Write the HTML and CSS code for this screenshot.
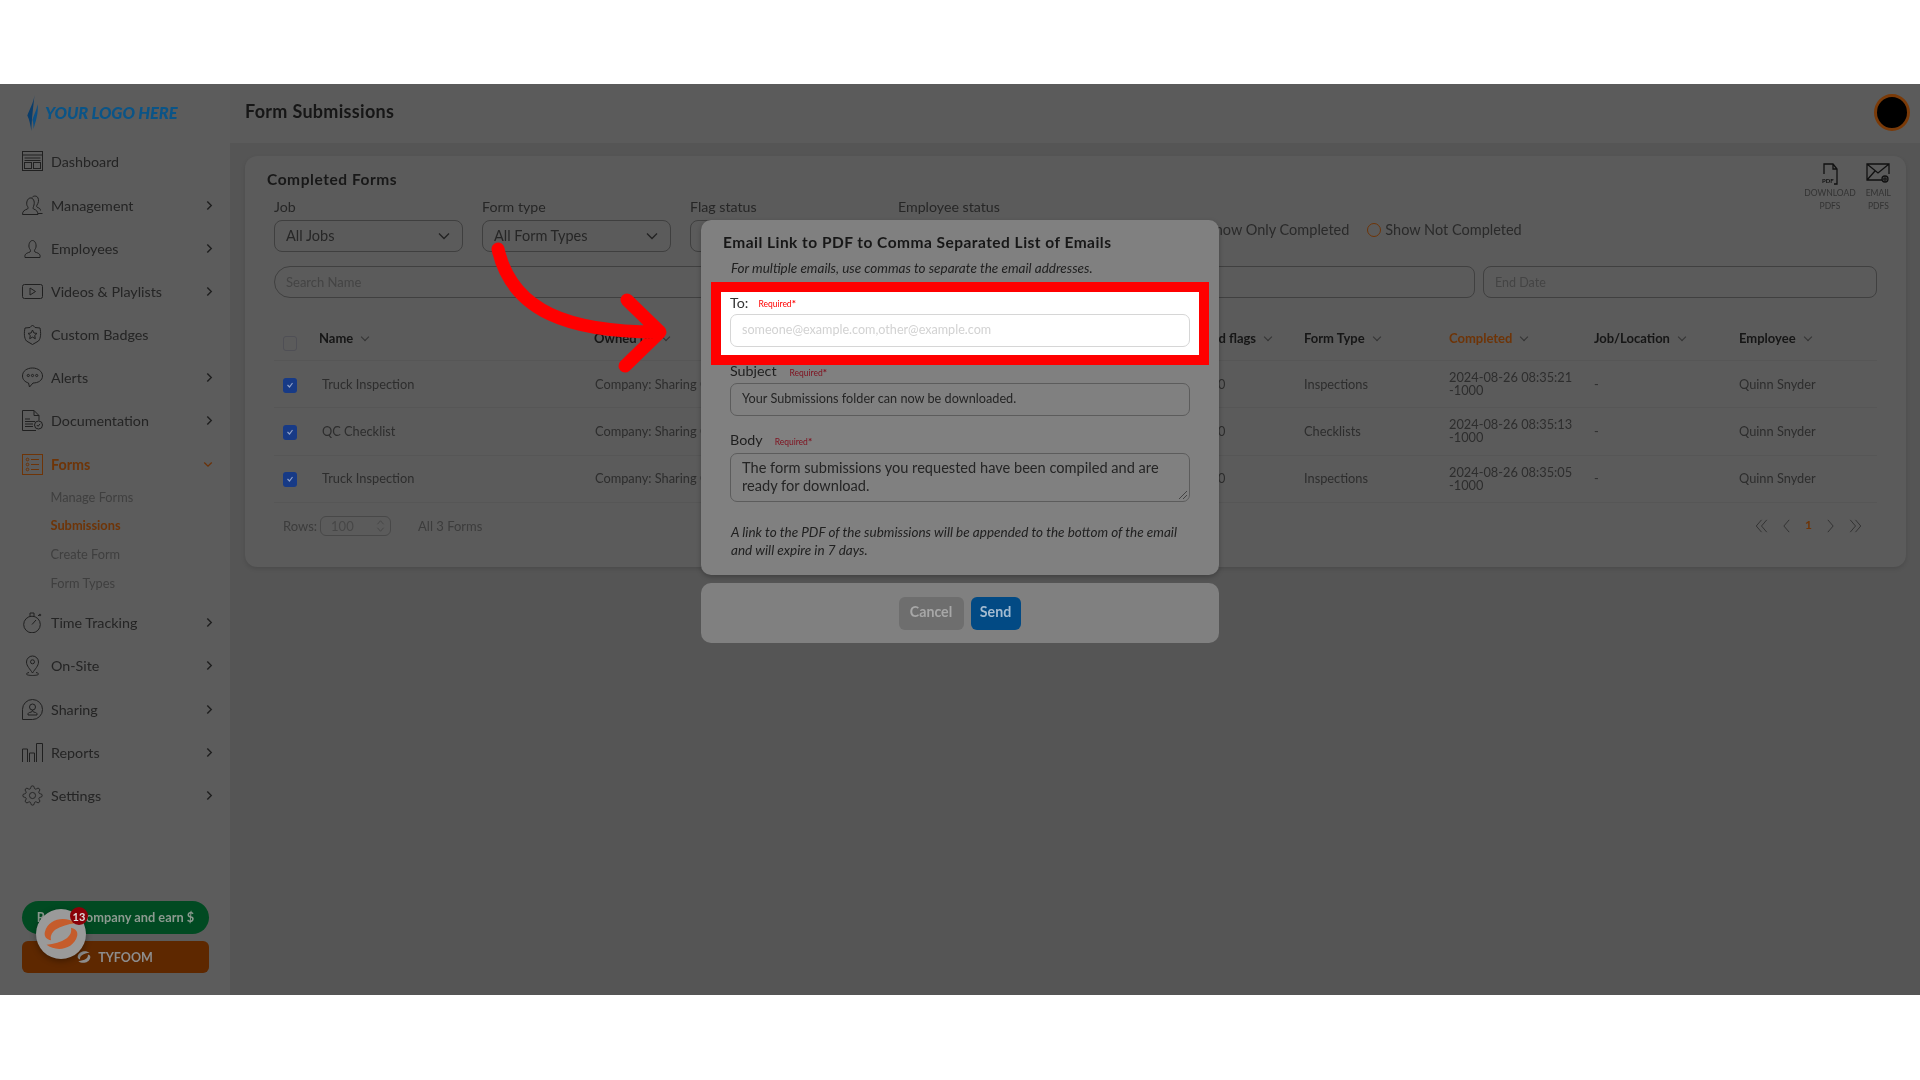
FILE: index.html
```html
<!DOCTYPE html>
<html lang="en">
<head>
<meta charset="utf-8">
<title>Form Submissions</title>
<link rel="stylesheet" href="styles.css">
</head>
<body>
<div class="app">
  <aside class="sidebar">
    <div class="logo">
      <svg class="logo-mark" viewBox="0 0 12 35"><path d="M7 0 C6 8 2 14 0 20 C2 24 3 29 4 35 C4 27 5 18 7 0Z" fill="#0a3d6b"/><path d="M10 9 C9 15 6 20 5 24 C6 27 6 30 6 33 C8 26 11 18 10 9Z" fill="#0a4f85"/></svg>
      <span class="logo-text">YOUR LOGO HERE</span>
    </div>
    <nav class="nav">
      <a class="nav-item"><svg class="ico" viewBox="0 0 21 21"><rect x=".5" y=".5" width="20" height="19"/><path d="M.5 4h20M2.5 7h16M2.5 9.500h16"/><rect x="2.500" y="11.500" width="7" height="6"/><rect x="11.500" y="11.500" width="7" height="6"/></svg><span>Dashboard</span></a>
      <a class="nav-item"><svg class="ico" viewBox="0 0 21 21"><path d="M.5 19.500c0-3.500 2-4.500 5-5.500 1-1 .5-2-.5-3.500-1-3 .5-7 3-7.500 3-.5 5 3 4 7-.5 2-1.500 3-.5 4 3 1 4 2 4.500 5.500z"/><path d="M10 2.500c1.500-2 5-2 6 .5 1 2 .5 5-1 7-.5 1-.5 2 .5 2.500 2 .5 3 1.500 3 3"/><path d="M16 18.500h4.500"/></svg><span>Management</span><svg class="chev" viewBox="0 0 8 12"><path d="M1.500 1.500 6 6l-4.500 4.500"/></svg></a>
      <a class="nav-item"><svg class="ico" viewBox="0 0 21 21"><path d="M3 19.500c-.5-3 .5-4 5-5.500 1-1 .5-2-.5-3.500-1.500-3 0-8 3-8s4.500 5 3 8c-1 1.500-1.500 2.500-.5 3.500 4.500 1.500 5.500 2.500 5 5.500z"/></svg><span>Employees</span><svg class="chev" viewBox="0 0 8 12"><path d="M1.500 1.500 6 6l-4.500 4.500"/></svg></a>
      <a class="nav-item"><svg class="ico" viewBox="0 0 21 21"><rect x=".5" y="3.500" width="20" height="14" rx="2"/><path d="m8 7 5.500 3.500L8 14z"/></svg><span>Videos &amp; Playlists</span><svg class="chev" viewBox="0 0 8 12"><path d="M1.500 1.500 6 6l-4.500 4.500"/></svg></a>
      <a class="nav-item"><svg class="ico" viewBox="0 0 21 21"><path d="M10.500 1 13 3.500l5 .5c1 5 1 10-1.500 13l-6 3.500-6-3.500C2 14 2 9 3 4l5-.5z"/><path d="m10.500 6 1.400 3 3.100.4-2.300 2.100.6 3.200-2.800-1.600-2.800 1.600.6-3.200L6 9.400 9.100 9z"/></svg><span>Custom Badges</span></a>
      <a class="nav-item"><svg class="ico" viewBox="0 0 21 21"><path d="M10.500 1C5 1 .5 4 .5 9c0 3.500 2.500 6 6 7l1 4 3.500-4c5 0 9.500-2.500 9.500-7s-4.500-8-10-8z"/><circle cx="6.300" cy="8.500" r="1.100"/><circle cx="10.500" cy="8.500" r="1.100"/><circle cx="14.700" cy="8.500" r="1.100"/></svg><span>Alerts</span><svg class="chev" viewBox="0 0 8 12"><path d="M1.500 1.500 6 6l-4.500 4.500"/></svg></a>
      <a class="nav-item"><svg class="ico" viewBox="0 0 21 21"><path d="M14 20.500H.5V.5H12l5 5v5"/><path d="M12 .5v5h5M3 9h5M3 11.500h10M3 14h8M3 16.500h8"/><circle cx="16.500" cy="15" r="4"/><path d="m14.800 15 1.300 1.300 2-2.500"/></svg><span>Documentation</span><svg class="chev" viewBox="0 0 8 12"><path d="M1.500 1.500 6 6l-4.500 4.500"/></svg></a>
      <a class="nav-item active"><svg class="ico" viewBox="0 0 21 21"><rect x=".5" y=".5" width="20" height="20"/><circle cx="5.500" cy="5.500" r="1.300"/><circle cx="5.500" cy="10.500" r="1.300"/><circle cx="5.500" cy="15.500" r="1.300"/><path d="M9 5.500h8M9 10.500h8M9 15.500h8"/></svg><span>Forms</span><svg class="chev-down" viewBox="0 0 12 8"><path d="M1.500 1.500 6 6l4.500-4.500"/></svg></a>
      <div class="subnav">
        <a class="sub-item">Manage Forms</a>
        <a class="sub-item current">Submissions</a>
        <a class="sub-item">Create Form</a>
        <a class="sub-item">Form Types</a>
      </div>
      <a class="nav-item"><svg class="ico" viewBox="0 0 21 21"><circle cx="10" cy="12.500" r="8.300"/><path d="M8 4V1h4v3M10 12.500l4-4.500M16 4l1.500-1.500"/><circle cx="18" cy="3" r=".8"/></svg><span>Time Tracking</span><svg class="chev" viewBox="0 0 8 12"><path d="M1.500 1.500 6 6l-4.500 4.500"/></svg></a>
      <a class="nav-item"><svg class="ico" viewBox="0 0 21 21"><path d="M10.500 18C8 14 4.500 11 4.500 7a6 6 0 0 1 12 0c0 4-3.500 7-6 11z"/><circle cx="10.500" cy="6.800" r="2"/><path d="M7 17.500c-2 .5-2.500 1-2.500 1.500 0 1 3 1.500 6 1.500s6-.5 6-1.500c0-.5-.5-1-2.500-1.500"/></svg><span>On-Site</span><svg class="chev" viewBox="0 0 8 12"><path d="M1.500 1.500 6 6l-4.500 4.500"/></svg></a>
      <a class="nav-item"><svg class="ico" viewBox="0 0 21 21"><path d="M.5 20.500V10.500a10 10 0 1 1 10 10z"/><circle cx="10.500" cy="8" r="3"/><path d="M10.500 11c0 1.500-.5 2-3 2.500-1.500.5-1.500 1-1.500 2.500h9c0-1.500 0-2-1.500-2.500-2.500-.5-3-1-3-2.500"/></svg><span>Sharing</span><svg class="chev" viewBox="0 0 8 12"><path d="M1.500 1.500 6 6l-4.500 4.500"/></svg></a>
      <a class="nav-item"><svg class="ico" viewBox="0 0 21 21"><path d="M.5 20V7h5v13M7.500 20v-9h5v9M14.500 20V1.500h6V20"/></svg><span>Reports</span><svg class="chev" viewBox="0 0 8 12"><path d="M1.500 1.500 6 6l-4.500 4.500"/></svg></a>
      <a class="nav-item"><svg class="ico" viewBox="0 0 24 24"><circle cx="12" cy="12" r="3.500"/><path d="M19.400 15a1.650 1.650 0 0 0 .33 1.820l.06.06a2 2 0 0 1 0 2.830 2 2 0 0 1-2.830 0l-.06-.06a1.650 1.650 0 0 0-1.820-.33 1.650 1.650 0 0 0-1 1.510V21a2 2 0 0 1-2 2 2 2 0 0 1-2-2v-.09A1.650 1.650 0 0 0 9 19.400a1.650 1.650 0 0 0-1.820.33l-.06.06a2 2 0 0 1-2.830 0 2 2 0 0 1 0-2.830l.06-.06a1.650 1.650 0 0 0 .33-1.820 1.650 1.650 0 0 0-1.510-1H3a2 2 0 0 1-2-2 2 2 0 0 1 2-2h.09A1.650 1.650 0 0 0 4.600 9a1.650 1.650 0 0 0-.33-1.820l-.06-.06a2 2 0 0 1 0-2.830 2 2 0 0 1 2.830 0l.06.06a1.650 1.650 0 0 0 1.820.33H9a1.650 1.650 0 0 0 1-1.510V3a2 2 0 0 1 2-2 2 2 0 0 1 2 2v.09a1.650 1.650 0 0 0 1 1.510 1.650 1.650 0 0 0 1.820-.33l.06-.06a2 2 0 0 1 2.830 0 2 2 0 0 1 0 2.830l-.06.06a1.650 1.650 0 0 0-.33 1.820V9a1.650 1.650 0 0 0 1.510 1H21a2 2 0 0 1 2 2 2 2 0 0 1-2 2h-.09a1.650 1.650 0 0 0-1.510 1z"/></svg><span>Settings</span><svg class="chev" viewBox="0 0 8 12"><path d="M1.500 1.500 6 6l-4.500 4.500"/></svg></a>
    </nav>
    <div class="side-actions">
      <a class="promo">Refer a company and earn $</a>
      <a class="brand-btn"><svg class="swirl-small" viewBox="0 0 40 40"><path d="M36 8C26 0 6 2 2 18c-1 5 2 8 7 9-1-4 0-8 5-12 6-4 14-6 22-7Z"/><path d="M4 32c10 8 30 6 34-10 1-5-2-8-7-9 1 4 0 8-5 12-6 4-14 6-22 7Z"/></svg>TYFOOM</a>
    </div>
  </aside>
  <main class="main">
    <header class="topbar">
      <h1 class="page-title">Form Submissions</h1>
      <div class="avatar"></div>
    </header>
    <div class="content">
      <section class="card">
        <div class="card-head">
          <h2 class="card-title">Completed Forms</h2>
          <div class="exports">
            <a class="export export-pdf"><svg class="export-ico" viewBox="0 0 24 22"><path d="M6 11V1h9l4 5v15h-3M15 1v5h4"/><text x="4" y="20" class="pdf-word">PDF</text></svg><span>DOWNLOAD<br>PDFS</span></a>
            <a class="export"><svg class="export-ico" viewBox="0 0 24 22"><path d="M16 17H1V1h22v10M1 1l11 9L23 1M1 17l8-9"/><circle cx="19" cy="16" r="3"/><circle cx="19" cy="16" r="1.200"/></svg><span>EMAIL<br>PDFS</span></a>
          </div>
        </div>
        <div class="filters">
          <div class="filter"><label class="filter-label">Job</label><div class="select">All Jobs<svg class="sel-chev" viewBox="0 0 12 8"><path d="M1 1.500 6 6.500l5-5"/></svg></div></div>
          <div class="filter"><label class="filter-label">Form type</label><div class="select">All Form Types<svg class="sel-chev" viewBox="0 0 12 8"><path d="M1 1.500 6 6.500l5-5"/></svg></div></div>
          <div class="filter"><label class="filter-label">Flag status</label><div class="select"></div></div>
          <div class="filter"><label class="filter-label">Employee status</label><div class="select"></div></div>
          <div class="radios">
            <span class="radio"></span><span class="radio-text">Show Only Completed</span>
            <span class="radio"></span><span class="radio-text">Show Not Completed</span>
          </div>
        </div>
        <div class="searches">
          <div class="search-box pill">Search Name</div>
          <div class="search-box"></div>
          <div class="search-box end">End Date</div>
        </div>
        <div class="table">
          <div class="row head">
            <span class="cb empty"></span>
            <span class="th">Name<i class="sort"></i></span>
            <span class="th">Owned by<i class="sort"></i></span>
            <span class="th">Unresolved flags<i class="sort"></i></span>
            <span class="th">Form Type<i class="sort"></i></span>
            <span class="th sorted">Completed<i class="sort"></i></span>
            <span class="th">Job/Location<i class="sort"></i></span>
            <span class="th">Employee<i class="sort"></i></span>
          </div>
          <div class="row">
            <span class="cb"><svg viewBox="0 0 14 14"><path d="m4.500 7 2 2 3-4"/></svg></span>
            <span class="td name">Truck Inspection</span><span class="td owner">Company: Sharing Co</span><span class="td flags">0</span><span class="td">Inspections</span><span class="td stamp">2024-08-26 08:35:21 -1000</span><span class="td">-</span><span class="td">Quinn Snyder</span>
          </div>
          <div class="row">
            <span class="cb"><svg viewBox="0 0 14 14"><path d="m4.500 7 2 2 3-4"/></svg></span>
            <span class="td name">QC Checklist</span><span class="td owner">Company: Sharing Co</span><span class="td flags">0</span><span class="td">Checklists</span><span class="td stamp">2024-08-26 08:35:13 -1000</span><span class="td">-</span><span class="td">Quinn Snyder</span>
          </div>
          <div class="row">
            <span class="cb"><svg viewBox="0 0 14 14"><path d="m4.500 7 2 2 3-4"/></svg></span>
            <span class="td name">Truck Inspection</span><span class="td owner">Company: Sharing Co</span><span class="td flags">0</span><span class="td">Inspections</span><span class="td stamp">2024-08-26 08:35:05 -1000</span><span class="td">-</span><span class="td">Quinn Snyder</span>
          </div>
        </div>
        <div class="table-foot">
          <span class="rows-label">Rows:</span>
          <div class="rows-select">100<svg class="updown" viewBox="0 0 10 16"><path d="m1.500 6 3.500-4 3.500 4M1.500 10 5 14l3.500-4"/></svg></div>
          <span class="count">All 3 Forms</span>
          <div class="pager">
            <svg class="pg pg-w" viewBox="0 0 14 16"><path d="M7 1 1 8l6 7M13 1 7 8l6 7"/></svg>
            <svg class="pg" viewBox="0 0 8 16"><path d="M7 1 1 8l6 7"/></svg>
            <span class="pg-num">1</span>
            <svg class="pg" viewBox="0 0 8 16"><path d="m1 1 6 7-6 7"/></svg>
            <svg class="pg pg-w" viewBox="0 0 14 16"><path d="m1 1 6 7-6 7M7 1l6 7-6 7"/></svg>
          </div>
        </div>
      </section>
    </div>
  </main>

  <div class="dialog">
    <div class="modal">
      <h3 class="modal-title">Email Link to PDF to Comma Separated List of Emails</h3>
      <p class="hint">For multiple emails, use commas to separate the email addresses.</p>
      <div class="spotlight">
        <div class="field-label to-label">To: <small class="req">Required<b>*</b></small></div>
        <div class="input light">someone@example.com,other@example.com</div>
      </div>
      <div class="field-label subject-label">Subject <small class="req">Required<b>*</b></small></div>
      <div class="input">Your Submissions folder can now be downloaded.</div>
      <div class="field-label body-label">Body <small class="req">Required<b>*</b></small></div>
      <div class="input area">The form submissions you requested have been compiled and are ready for download.<svg class="grip" viewBox="0 0 10 10"><path d="M9 1 1 9M9 5 5 9"/></svg></div>
      <p class="note">A link to the PDF of the submissions will be appended to the bottom of the email and will expire in 7 days.</p>
    </div>
    <div class="modal-foot">
      <button class="btn cancel">Cancel</button>
      <button class="btn send">Send</button>
    </div>
  </div>

  <svg class="arrow" viewBox="0 0 1920 911"><path d="M498 165C512 228 570 248 657 248M627 216l33 32-35 34"/></svg>

  <div class="launcher">
    <svg viewBox="0 0 40 40"><path d="M36 8C26 0 6 2 2 18c-1 5 2 8 7 9-1-4 0-8 5-12 6-4 14-6 22-7Z"/><path d="M4 32c10 8 30 6 34-10 1-5-2-8-7-9 1 4 0 8-5 12-6 4-14 6-22 7Z"/></svg>
    <span class="badge">13</span>
  </div>
</div>
</body>
</html>
```
FILE: styles.css
```css
* { box-sizing: border-box; }
html, body { margin: 0; height: 100%; background: #fff; overflow: hidden; }
body { font-family: Lato, "Open Sans", sans-serif; color: #1d1d1d; }
h1, h2, h3, p { margin: 0; }

.app { position: relative; display: flex; height: 911px; margin-top: 84px; background: #5b5b5b; filter: blur(.6px); }

/* sidebar */
.sidebar { width: 230px; flex: none; display: flex; flex-direction: column; background: #5c5c5c; padding: 0 21px 22px 22px; }
.logo { display: flex; align-items: center; height: 56px; padding-top: 2px; padding-left: 5px; gap: 5px; }
.logo-mark { width: 13px; height: 36px; flex: none; }
.logo-text { font-size: 16.500px; font-weight: 900; font-style: italic; color: #0a5487; white-space: nowrap; letter-spacing: -.1px; }
.nav { display: flex; flex-direction: column; margin-top: .3px; }
.nav-item { display: flex; align-items: center; height: 43.180px; gap: 8px; font-size: 14.300px; color: #242424; }
.nav-item span { flex: 1; }
.ico { width: 21px; height: 21px; flex: none; fill: none; stroke: #202020; stroke-width: 1; }
.chev { width: 7px; height: 11px; flex: none; fill: none; stroke: #1e1e1e; stroke-width: 1.600; margin-right: -4px; }
.chev-down { width: 10px; height: 7px; flex: none; fill: none; stroke: #6b3209; stroke-width: 1.600; margin-right: -4px; }
.nav-item.active { color: #6e3407; font-weight: 700; }
.nav-item.active .ico { stroke: #6e3407; }
.subnav { display: flex; flex-direction: column; margin: -3.500px 0 4.300px; padding-left: 28.500px; }
.sub-item { height: 28.700px; display: flex; align-items: center; font-size: 12.800px; color: #3f3f3f; }
.sub-item.current { color: #6e3407; font-weight: 700; }
.side-actions { margin-top: auto; display: flex; flex-direction: column; gap: 7px; }
.promo { height: 33px; padding-bottom: 2px; border-radius: 17px; background: #014a22; color: #8c9a90; font-size: 12.800px; font-weight: 700; display: flex; align-items: center; justify-content: center; white-space: nowrap; }
.brand-btn { height: 32px; border-radius: 6px; background: #5e2800; color: #8d8d8d; font-size: 12.500px; font-weight: 700; display: flex; align-items: center; justify-content: center; gap: 7px; padding-right: 1px; }
.swirl-small { width: 14px; height: 14px; fill: #8d8d8d; }

/* top */
.main { flex: 1; display: flex; flex-direction: column; min-width: 0; }
.topbar { height: 59px; flex: none; display: flex; align-items: center; justify-content: space-between; padding: 0 10px 5px 15px; background: #5b5b5b; }
.page-title { font-size: 18px; letter-spacing: .3px; font-weight: 700; color: #161616; }
.avatar { width: 36px; height: 37px; margin-top: 2px; border-radius: 50%; background: #000; border: 3px solid #7a3a08; }

/* card */
.content { flex: 1; background: #555; padding: 13px 14px 0 15px; }
.card { position: relative; height: 411px; background: #5b5b5b; border-radius: 12px; padding: 14px 29px 0; box-shadow: 0 2px 4px rgba(0,0,0,.12); }
.card-head { display: flex; justify-content: space-between; height: 18px; }
.card-title { font-size: 15.500px; letter-spacing: .55px; font-weight: 700; line-height: 18px; margin-left: -7px; color: #181818; }
.exports { display: flex; gap: 10px; margin: -7px -14px 0 0; }
.export { display: flex; flex-direction: column; align-items: center; font-size: 8.500px; line-height: 12.500px; text-align: center; color: #333; height: 50px; }
.export-ico { width: 24px; height: 22px; margin-bottom: 2px; flex: none; fill: none; stroke: #111; stroke-width: 1.300; }
.pdf-word { font-size: 6px; font-weight: 700; fill: #111; stroke: none; font-family: Lato, sans-serif; }

.filters { display: flex; gap: 19px; margin-top: 10px; height: 54px; }
.filter { width: 189px; flex: none; }
.filter-label { display: block; font-size: 14.200px; line-height: 18px; margin-bottom: 4px; color: #262626; }
.select { position: relative; height: 32px; border: 1px solid #3f3f3f; border-radius: 8px; display: flex; align-items: center; justify-content: space-between; padding: 0 12px 2px 11px; font-size: 14.500px; color: #262626; }
.sel-chev { width: 12px; height: 8px; margin-top: 2px; fill: none; stroke: #222; stroke-width: 1.300; }
.radios { display: flex; align-items: center; height: 28px; margin: 17px 0 0 83px; white-space: nowrap; font-size: 14.500px; color: #2a2a2a; }
.radio { width: 14px; height: 14px; margin-top: 2px; border-radius: 50%; border: 1px solid #6e3407; margin-right: 4px; flex: none; }
.radio-text { margin-right: 18px; }

.searches { display: grid; grid-template-columns: 1fr 394px 394px; gap: 8px; margin-top: 14px; }
.search-box { height: 32px; border: 1px solid #404040; border-radius: 8px; display: flex; align-items: center; padding-left: 11px; font-size: 13px; color: #444; }
.search-box.pill { border-radius: 16px; }
.search-box.end { font-size: 12.500px; }

.table { margin-top: 18px; }
.row { display: grid; grid-template-columns: 45px 275px 566px 144px 145px 145px 145px 138px; align-items: center; height: 47.300px; border-bottom: 1px solid #565656; font-size: 12.800px; color: #2d2d2d; }
.row.head { height: 45px; }
.cb { width: 14px; height: 15px; margin: 2px 0 0 9px; border-radius: 3px; background: #173a86; display: block; }
.cb svg { display: block; fill: none; stroke: #8ea0c8; stroke-width: 1.200; }
.cb.empty { margin-top: 10px; background: none; border: 1px solid #4f4f55; }
.th { font-size: 13px; font-weight: 700; color: #161616; display: flex; align-items: center; }
.th.sorted { color: #6e3407; }
.sort { width: 6px; height: 6px; margin: -3px 0 0 9px; border-right: 1px solid #333; border-bottom: 1px solid #333; transform: rotate(45deg); }
.td { line-height: 13px; padding-right: 4px; white-space: nowrap; }
.td.name { padding-left: 3px; }
.td.owner { padding-left: 1px; }
.td.flags { padding-left: 58px; }
.td.stamp { white-space: normal; max-width: 130px; }

.table-foot { display: flex; align-items: center; height: 46px; padding-left: 9px; font-size: 13px; color: #3c3c3c; }
.rows-label { margin-right: 3px; }
.rows-select { width: 71px; height: 20px; border: 1px solid #484848; border-radius: 6px; display: flex; align-items: center; justify-content: space-between; padding: 0 5px 0 10px; color: #474747; }
.updown { width: 9px; height: 14px; fill: none; stroke: #444; stroke-width: 1; }
.count { margin-left: 27px; }
.pager { margin-left: auto; display: flex; align-items: center; gap: 15px; margin-right: 15px; }
.pg { width: 7px; height: 14px; fill: none; stroke: #2e2e2e; stroke-width: 1; }
.pg-w { width: 13px; }
.pg-num { color: #6e3407; font-weight: 700; font-size: 12px; margin-top: -3px; }

/* dialog */
.dialog { position: absolute; left: 701px; top: 136px; width: 518px; display: flex; flex-direction: column; gap: 8px; }
.modal { height: 355px; background: #808080; border-radius: 10px; padding: 12px 29px 0; box-shadow: 0 2px 5px rgba(0,0,0,.25); }
.modal-title { font-size: 15.500px; letter-spacing: .47px; line-height: 20px; font-weight: 700; margin-left: -7px; color: #171717; white-space: nowrap; }
.hint { font-size: 13.500px; font-style: italic; line-height: 16px; margin: 8px 0 0 1px; color: #202020; white-space: nowrap; }
.spotlight { background: #fff; border: 10px solid #f00; margin: 6px -19px 0; padding: 2px 9px 0; height: 83px; }
.field-label { font-size: 14.300px; line-height: 18px; color: #1e1e1e; display: flex; align-items: center; gap: 13px; }
.to-label { gap: 10px; height: 17px; line-height: 17px; margin-bottom: 3px; color: #333; }
.subject-label { margin-top: -3px; margin-bottom: 3px; }
.body-label { margin-top: 15px; margin-bottom: 4px; gap: 12px; }
.req { font-size: 8.500px; line-height: 10px; color: #7f0f1d; margin-top: 2px; }
.req b { font-size: 10px; vertical-align: 0; }
.to-label .req { color: #f00; }
.input { position: relative; height: 33px; border: 1px solid #5c5c5c; border-radius: 7px; display: flex; align-items: center; padding: 0 0 3px 11px; font-size: 12.700px; color: #242424; }
.input.light { border: 1.500px solid #d6d6d6; color: #d2d2d2; font-size: 12.600px; padding-bottom: 2px; }
.input.area { height: 49px; display: block; padding: 5px 20px 0 11px; line-height: 18px; font-size: 14.600px; }
.grip { position: absolute; right: 1px; bottom: 1px; width: 10px; height: 10px; fill: none; stroke: #333; stroke-width: .8; }
.note { margin: 21px 0 0 1px; font-size: 13.500px; font-style: italic; line-height: 18px; color: #202020; }
.modal-foot { height: 60px; background: #808080; border-radius: 10px; display: flex; align-items: center; justify-content: center; gap: 7px; padding-right: 1px; }
.btn { height: 33px; border: 0; border-radius: 6px; font-family: inherit; font-size: 14.200px; font-weight: 700; padding: 0 0 3px; }
.cancel { width: 65px; background: #6e6e6e; color: #a7a7a7; }
.send { width: 50px; background: #024a84; color: #a4bbd0; }

/* annotation */
.arrow { position: absolute; left: 0; top: 0; width: 1920px; height: 911px; fill: none; stroke: #f00; stroke-width: 13; stroke-linecap: round; stroke-linejoin: round; pointer-events: none; }

/* launcher */
.launcher { position: absolute; left: 36px; top: 825px; width: 50px; height: 50px; border-radius: 50%; background: #9a9a9a; box-shadow: 0 2px 6px rgba(0,0,0,.35); display: flex; align-items: center; justify-content: center; }
.launcher svg { width: 36px; height: 36px; fill: #c55c2c; }
.badge { position: absolute; left: 34px; top: -2px; width: 18px; height: 18px; border-radius: 50%; background: #8a0008; color: #ddd; font-size: 11px; font-weight: 700; display: flex; align-items: center; justify-content: center; }
```
